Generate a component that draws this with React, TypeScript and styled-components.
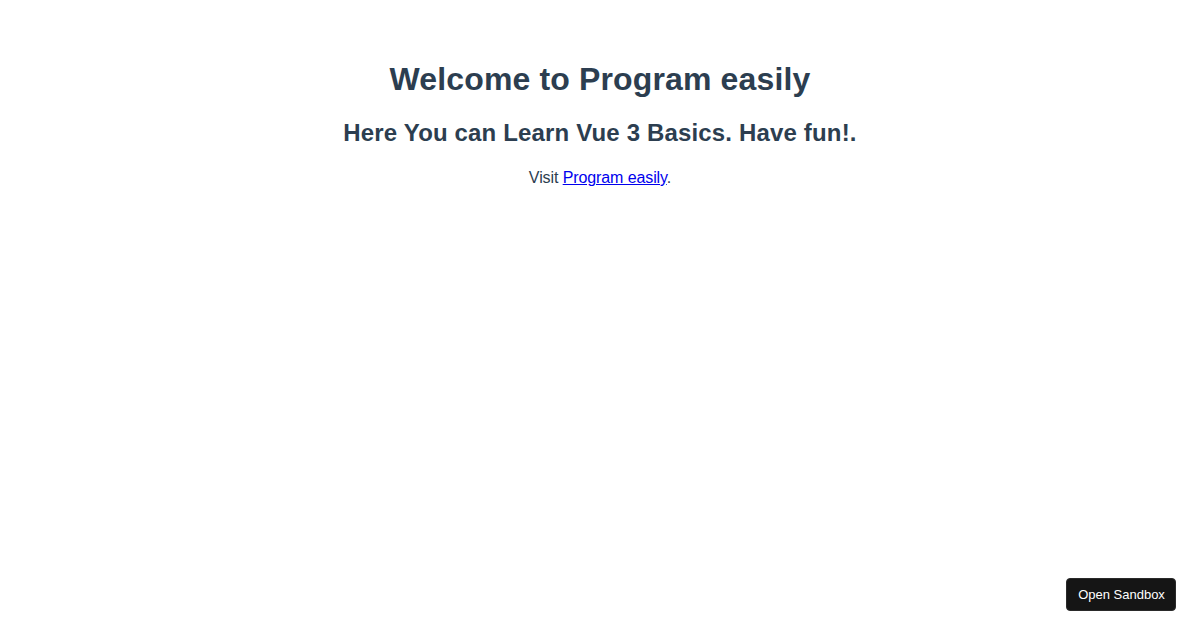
import React from "react";
import styled, { createGlobalStyle } from "styled-components";

const GlobalStyle = createGlobalStyle`
  body {
    margin: 0;
    background: #ffffff;
  }
`;

const AppRoot = styled.div`
  font-family: "Liberation Sans", Arial, Helvetica, sans-serif;
  text-align: center;
  color: #2c3e50;
  padding-top: 61px;
`;

const Title = styled.h1`
  font-size: 32px;
  font-weight: bold;
  letter-spacing: 0.14px;
  margin: 0 0 21px;
`;

const Subtitle = styled.h2`
  font-size: 24px;
  font-weight: bold;
  letter-spacing: 0.16px;
  margin: 0 0 22px;
`;

const Text = styled.p`
  font-size: 16px;
  letter-spacing: -0.1px;
  margin: 0;
`;

const Link = styled.a`
  color: #0000ee;
  text-decoration: underline;
`;

const SandboxButton = styled.button`
  position: fixed;
  right: 24px;
  bottom: 19px;
  width: 110px;
  height: 33px;
  padding: 0 0 0 1px;
  border: 1px solid #2a2a2a;
  border-radius: 4px;
  background: #151515;
  color: #ffffff;
  font-family: "Liberation Sans", Arial, sans-serif;
  font-size: 13px;
  text-align: center;
  cursor: pointer;
`;

export default function App() {
  return (
    <>
      <GlobalStyle />
      <AppRoot>
        <Title>Welcome to Program easily</Title>
        <Subtitle>Here You can Learn Vue 3 Basics. Have fun!.</Subtitle>
        <Text>
          Visit <Link href="#">Program easily</Link>.
        </Text>
      </AppRoot>
      <SandboxButton>Open Sandbox</SandboxButton>
    </>
  );
}
